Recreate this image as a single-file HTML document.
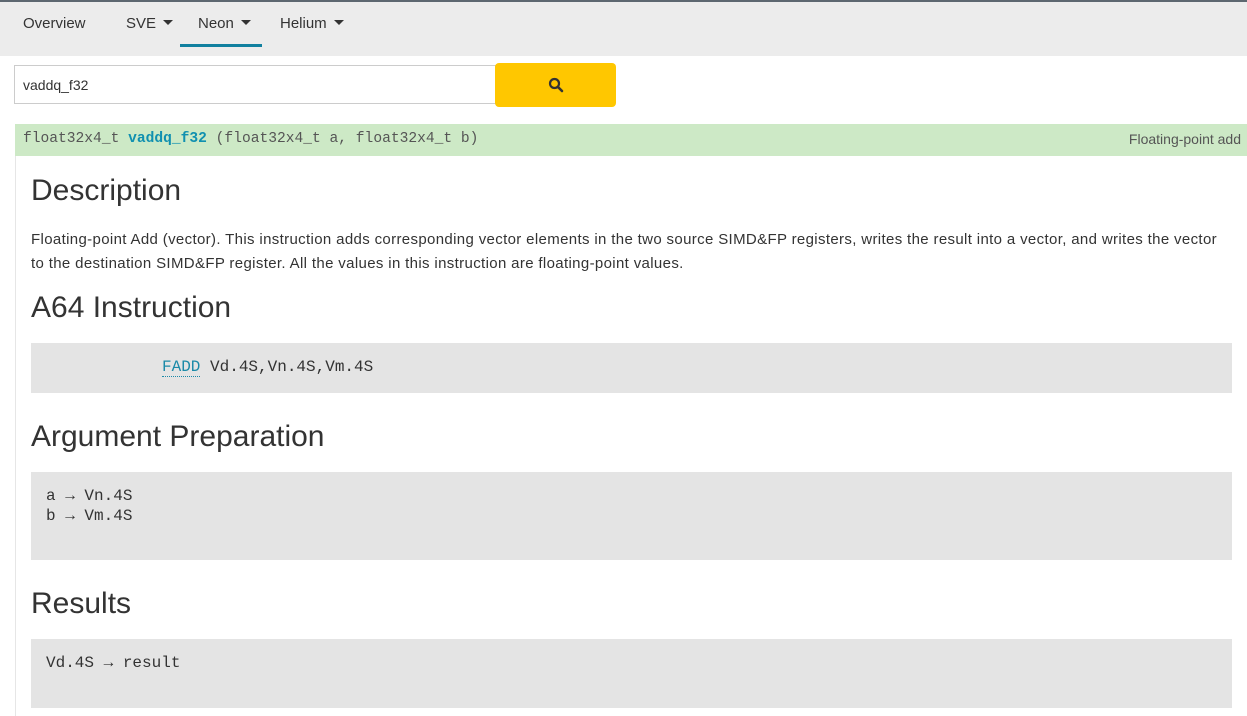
<!DOCTYPE html>
<html><head><meta charset="utf-8"><style>
*{box-sizing:border-box;margin:0;padding:0}
body{width:1247px;height:715px;overflow:hidden;background:#fff;font-family:"Liberation Sans",sans-serif;color:#333;position:relative}
.top{position:absolute;left:0;top:0;width:1247px;height:2px;background:#5d6770}
.nav{position:absolute;left:0;top:2px;width:1247px;height:54px;background:#ececec}
.nav span{position:absolute;top:13px;font-size:15px;color:#333}
.tri{display:inline-block;width:0;height:0;border-left:5px solid transparent;border-right:5px solid transparent;border-top:5px solid #333;margin-left:7px;vertical-align:3px}
.ul{position:absolute;left:180px;top:42px;width:82px;height:3px;background:#11809f}
.inp{position:absolute;left:14px;top:65px;width:482px;height:39px;border:1px solid #ccc;font-size:14px;padding:11px 8px;color:#333}
.btn{position:absolute;left:495px;top:63px;width:121px;height:44px;background:#ffc700;border-radius:4px}
.green{position:absolute;left:15px;top:124px;width:1232px;height:32px;background:#cde9c6;font-family:"Liberation Mono",monospace;font-size:14.6px;color:#555;padding:7px 8px}
.green b{color:#1090b0}
.green .r{position:absolute;right:6px;top:7px;font-family:"Liberation Sans",sans-serif;font-size:14px;color:#555}
.lb{position:absolute;left:15px;top:156px;width:1px;height:560px;background:#e6e6e6}
h2{position:absolute;left:31px;font-weight:normal;font-size:30px;color:#333}
p{position:absolute;left:31px;top:228px;width:1210px;font-size:15px;line-height:24px;color:#333;white-space:nowrap;letter-spacing:0.35px}
.code{position:absolute;left:31px;width:1201px;background:#e4e4e4;font-family:"Liberation Mono",monospace;font-size:16px;color:#333;padding:0 15px;line-height:20px}
.code a{color:#1c8aa8;text-decoration:none;border-bottom:1px dotted #1c8aa8}
</style></head><body>
<div class="top"></div>
<div class="nav">
<span style="left:23px">Overview</span>
<span style="left:126px">SVE<i class="tri"></i></span>
<span style="left:198px">Neon<i class="tri"></i></span>
<span style="left:280px">Helium<i class="tri"></i></span>
<div class="ul"></div>
</div>
<div class="inp">vaddq_f32</div>
<div class="btn"><svg width="16" height="16" style="position:absolute;left:53px;top:14px" viewBox="0 0 16 16"><circle cx="6.5" cy="6.5" r="4.5" fill="none" stroke="#333" stroke-width="2.2"/><path d="M10 10l4 4" stroke="#333" stroke-width="2.6" stroke-linecap="round"/></svg></div>
<div class="green">float32x4_t <b>vaddq_f32</b> (float32x4_t a, float32x4_t b)<span class="r">Floating-point add</span></div>
<div class="lb"></div>
<h2 style="top:174px">Description</h2>
<p>Floating-point Add (vector). This instruction adds corresponding vector elements in the two source SIMD&amp;FP registers, writes the result into a vector, and writes the vector<br>to the destination SIMD&amp;FP register. All the values in this instruction are floating-point values.</p>
<h2 style="top:291px">A64 Instruction</h2>
<div class="code" style="top:343px;height:50px;padding-top:14px;padding-left:131px"><a>FADD</a> Vd.4S,Vn.4S,Vm.4S</div>
<h2 style="top:420px">Argument Preparation</h2>
<div class="code" style="top:472px;height:88px;padding-top:14px">a → Vn.4S<br>b → Vm.4S</div>
<h2 style="top:587px">Results</h2>
<div class="code" style="top:639px;height:69px;padding-top:14px">Vd.4S → result</div>
</body></html>
